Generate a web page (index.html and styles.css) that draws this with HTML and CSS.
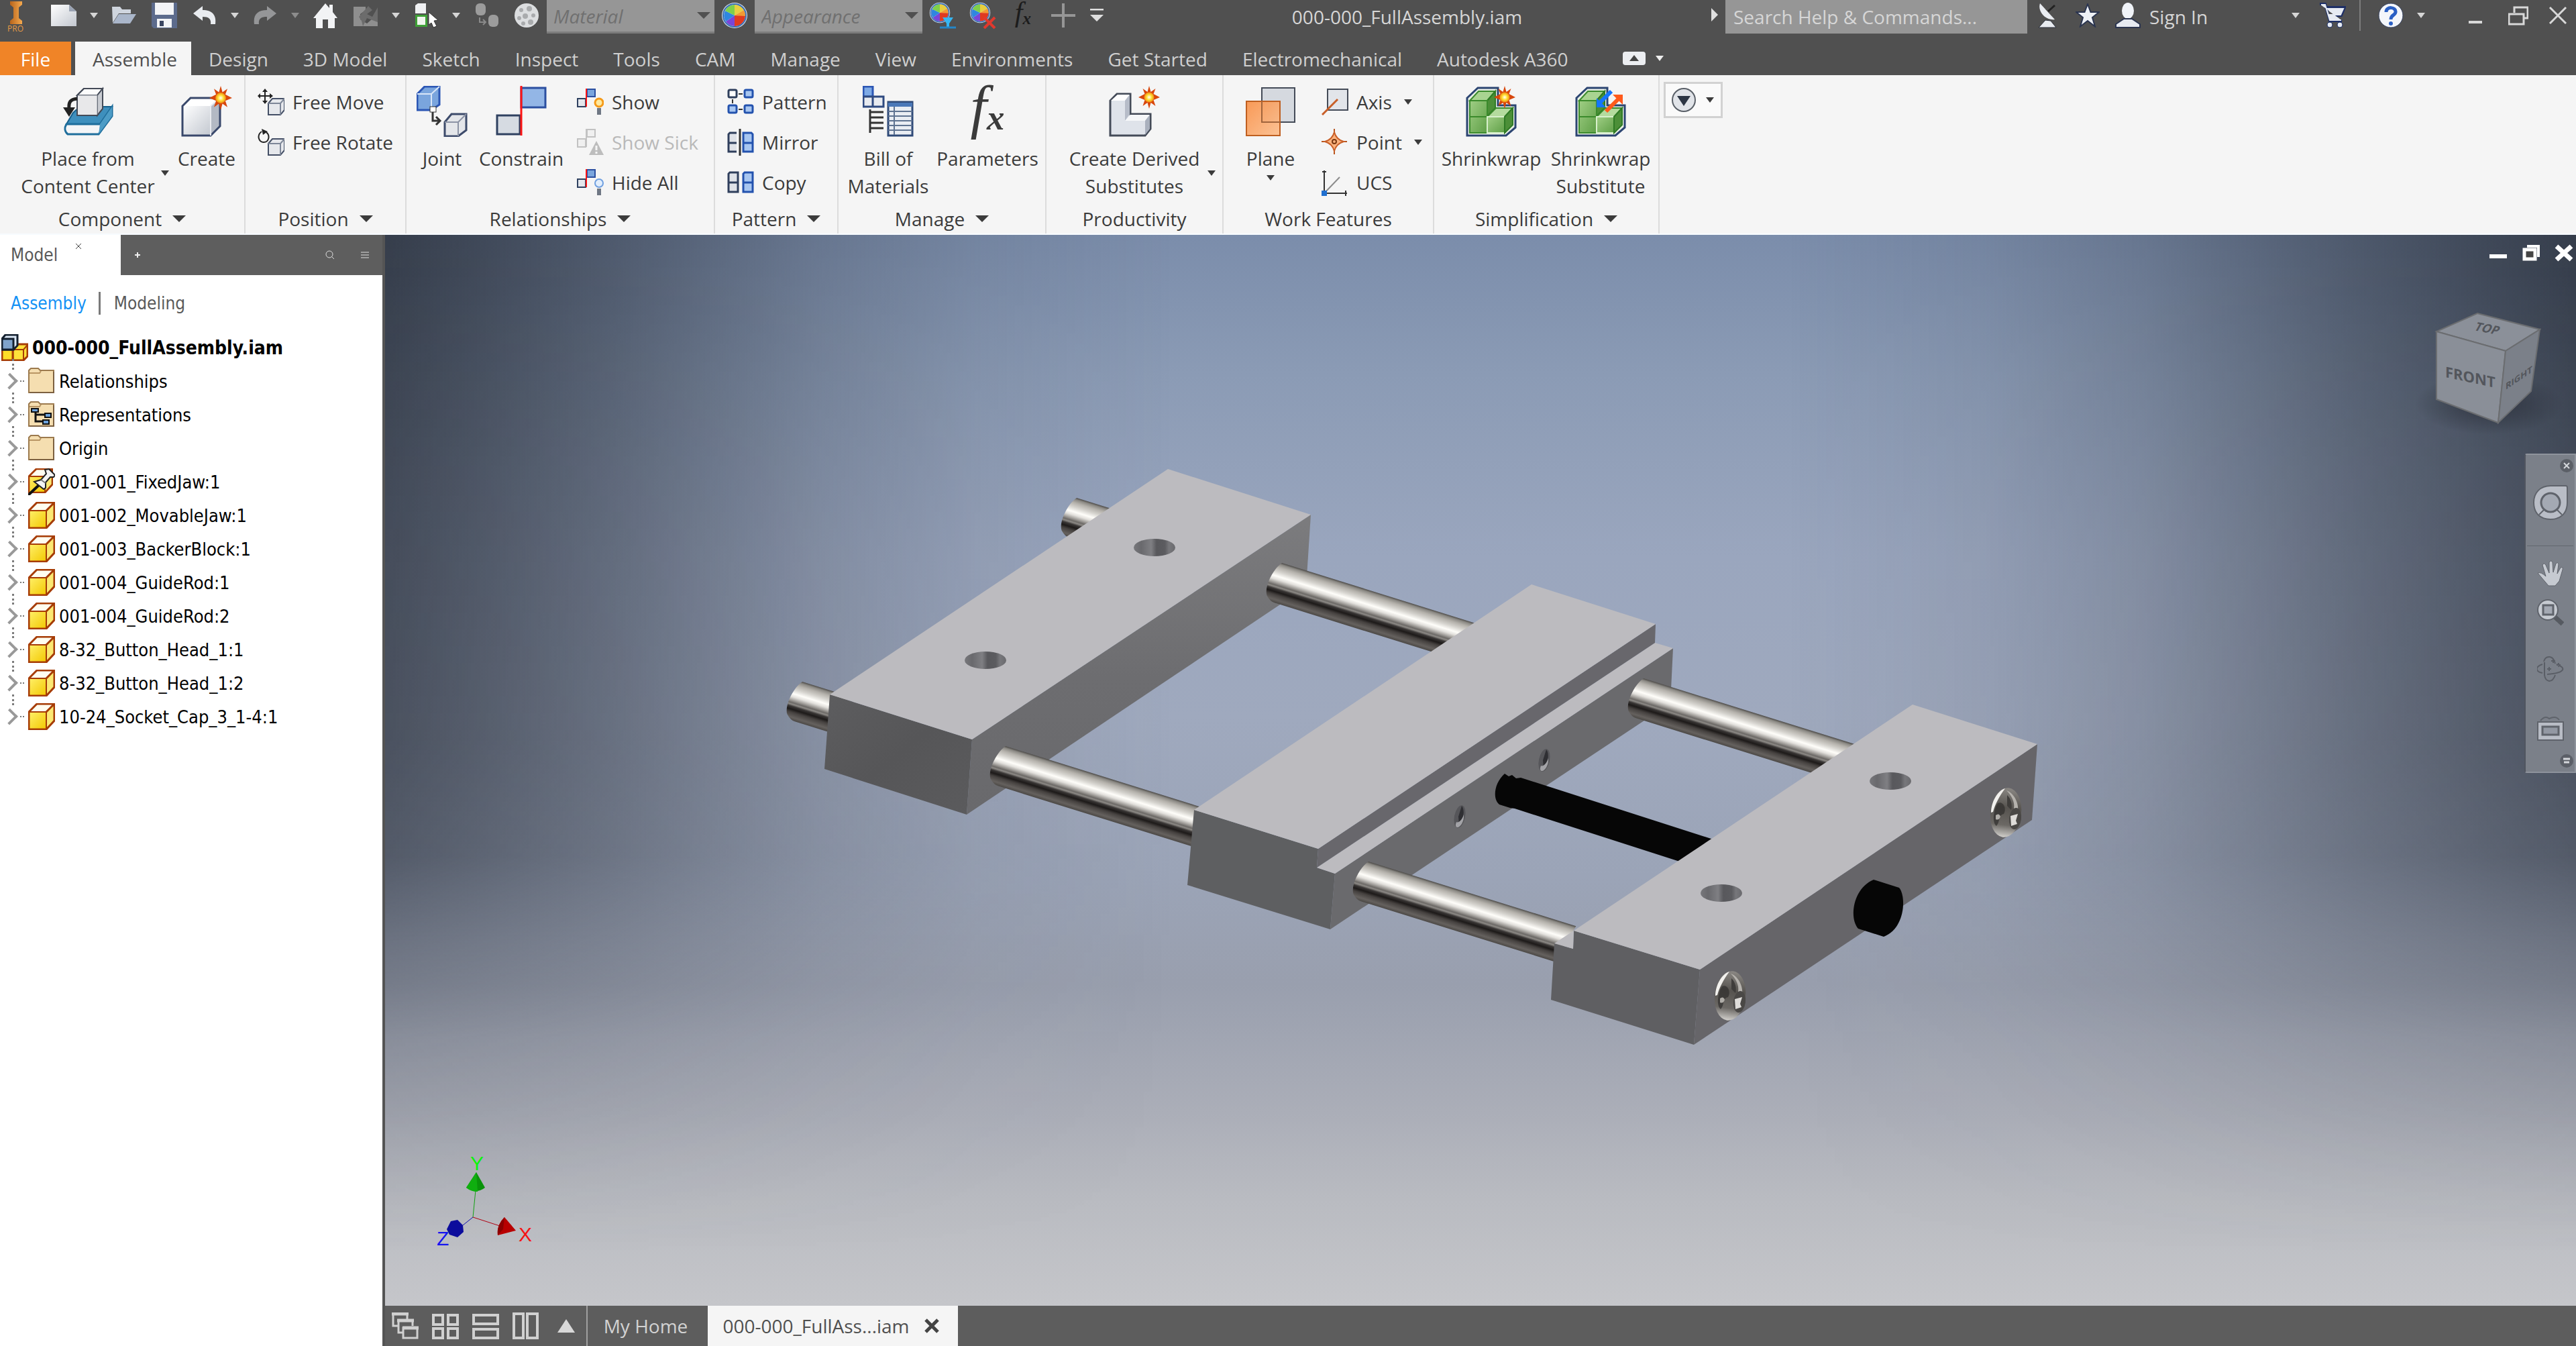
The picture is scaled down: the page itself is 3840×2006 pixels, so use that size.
FILE: index.html
```html
<!DOCTYPE html>
<html lang="en">
<head>
<meta charset="utf-8">
<title>000-000_FullAssembly.iam</title>
<link rel="stylesheet" href="styles.css">
</head>
<body>
<svg class="sprite" aria-hidden="true">
  <defs>
    <linearGradient id="g-white" x1="0" y1="0" x2="1" y2="1"><stop offset="0" stop-color="#ffffff"/><stop offset="1" stop-color="#c3c8d0"/></linearGradient>
    <linearGradient id="g-orange" x1="0" y1="0" x2="1" y2="1"><stop offset="0" stop-color="#f98f45"/><stop offset="1" stop-color="#fcbd8b"/></linearGradient>
    <linearGradient id="g-green" x1="0" y1="0" x2="1" y2="1"><stop offset="0" stop-color="#9fce84"/><stop offset="1" stop-color="#5f9f47"/></linearGradient>
    <linearGradient id="g-yellow" x1="0" y1="0" x2="1" y2="1"><stop offset="0" stop-color="#fff06a"/><stop offset="1" stop-color="#f2c800"/></linearGradient>
    <linearGradient id="g-ilogo" x1="0" y1="0" x2="1" y2="0"><stop offset="0" stop-color="#b8651c"/><stop offset="1" stop-color="#f5a94e"/></linearGradient>
    <radialGradient id="g-burst"><stop offset="0" stop-color="#ffffff"/><stop offset=".5" stop-color="#ffe23a"/><stop offset="1" stop-color="#f08a10"/></radialGradient>
  </defs>
  <symbol id="caret" viewBox="0 0 12 8"><path d="M0 0H12L6 8Z" fill="currentColor"/></symbol>
  <symbol id="caret-l" viewBox="0 0 20 10"><path d="M0 0H20L10 10Z" fill="currentColor"/></symbol>
  <symbol id="burst" viewBox="0 0 32 34"><path d="M16 0l2.500 9 7-5-3 8 9.500 5-9.500 4 3 9-7-5-2.500 9-2.500-9-7 5 3-9-9.500-4 9.500-5-3-8 7 5z" fill="#d8470c"/><circle cx="16" cy="17" r="7.500" fill="url(#g-burst)"/></symbol>

  <symbol id="logo" viewBox="0 0 18 34"><path d="M0 0H18V5L13 9V25L18 29V34H0V29L5 25V9L0 5Z" fill="url(#g-ilogo)"/></symbol>
  <symbol id="new" viewBox="0 0 40 34"><path d="M1 1H28L39 11V33H1Z" fill="url(#g-white)"/><path d="M28 1V11H39Z" fill="#9aa3b3"/></symbol>
  <symbol id="open" viewBox="0 0 40 34"><path d="M2 4H14L17 8H30V14H12L3 28Z" fill="#cfd5de"/><path d="M12 15H38L29 29H3Z" fill="#aab6ca"/></symbol>
  <symbol id="save" viewBox="0 0 40 40"><path d="M1 1H39V39H4L1 36Z" fill="#5c6b8c"/><path d="M6 1H34V19H6Z" fill="#f3f4f6"/><path d="M9 25H31V38H9Z" fill="#f3f4f6"/><path d="M13 28H19V36H13Z" fill="#3a4560"/></symbol>
  <symbol id="undo" viewBox="0 0 40 34"><path d="M3 14L17 3V9C31 9 38 16 36 30H29C30 22 26 19 17 19V25Z" fill="#e9ecf0"/></symbol>
  <symbol id="home" viewBox="0 0 40 40"><path d="M20 2L26 9V4H31V15L38 24H34V39H24V26H16V39H6V24H2Z" fill="#f2f3f5"/></symbol>
  <symbol id="update" viewBox="0 0 40 36"><path d="M2 5H20V10L12 16V24L22 30L38 16V34H2Z" fill="#8f8f8f"/><path d="M10 20L24 4L30 10L22 16L30 20L38 6V28L22 22L16 34L14 26Z" fill="#6c6c6c"/></symbol>
  <symbol id="asm" viewBox="0 0 40 38"><path d="M4 4L8 1H20V16H4Z" fill="#f0f1f3"/><path d="M4 18H22V36H4Z" fill="#3f9f37"/><path d="M7 21H19V33H7Z" fill="#f0f6ee"/><path d="M24 14L38 26L32 27L36 35L31 37L28 30L24 33Z" fill="#fff" stroke="#333" stroke-width="1"/></symbol>
  <symbol id="bodies" viewBox="0 0 40 38"><g fill="#9c9c9c"><rect x="4" y="1" width="15" height="18" rx="6"/><rect x="23" y="18" width="15" height="18" rx="6"/></g><path d="M10 22V29H18M15 25L19 29L15 33" stroke="#8a8a8a" stroke-width="2" fill="none"/></symbol>
  <symbol id="sphere" viewBox="0 0 40 40"><circle cx="20" cy="20" r="18" fill="#dcdee0"/><g fill="#a9abad"><circle cx="12" cy="12" r="3"/><circle cx="24" cy="10" r="4"/><circle cx="30" cy="20" r="3"/><circle cx="18" cy="21" r="4"/><circle cx="9" cy="24" r="3"/><circle cx="26" cy="30" r="4"/><circle cx="15" cy="32" r="3"/></g></symbol>
  <symbol id="wheel" viewBox="0 0 40 40"><circle cx="20" cy="20" r="19" fill="#dfe6ee"/><g stroke="none"><path d="M20 20V4A16 16 0 0 1 34 12Z" fill="#e8cf3f"/><path d="M20 20L34 12A16 16 0 0 1 36 22Z" fill="#f29a33"/><path d="M20 20L36 21A16 16 0 0 1 20 36Z" fill="#e03a20"/><path d="M20 20V36A16 16 0 0 1 7 29Z" fill="#7a45d8"/><path d="M20 20L7 29A16 16 0 0 1 6 13Z" fill="#2f86e0"/><path d="M20 20L6 13A16 16 0 0 1 20 4Z" fill="#7fd04a"/></g><circle cx="20" cy="20" r="17" fill="none" stroke="#3a6fb5" stroke-width="2"/></symbol>
  <symbol id="wheel-adjust" viewBox="0 0 40 40"><use href="#wheel" x="0" y="0" width="32" height="32"/><path d="M20 23H36L30 32V37H26V32Z" fill="#35b6f2"/><path d="M16 38H40" stroke="#2486c8" stroke-width="3"/></symbol>
  <symbol id="wheel-clear" viewBox="0 0 40 40"><use href="#wheel" x="0" y="0" width="32" height="32"/><path d="M22 23L38 39M38 23L22 39" stroke="#e0392e" stroke-width="4"/></symbol>
  <symbol id="plus" viewBox="0 0 40 40"><path d="M20 2V38M2 20H38" stroke="#969696" stroke-width="4"/></symbol>
  <symbol id="more" viewBox="0 0 20 20"><path d="M0 1H20" stroke="#e0e0e0" stroke-width="3"/><path d="M0 9H20L10 19Z" fill="#e0e0e0"/></symbol>
  <symbol id="dish" viewBox="0 0 34 40"><path d="M6 2C2 14 14 28 28 26Z" fill="#e9ecf1"/><path d="M18 14L28 5" stroke="#222" stroke-width="3"/><path d="M14 27L4 38H30L22 28Z" fill="#e9ecf1" stroke="#2b2f3a" stroke-width="1"/></symbol>
  <symbol id="star" viewBox="0 0 36 36"><path d="M18 1L22.500 13H35L25 21L29 34.500L18 26L7 34.500L11 21L1 13H13.500Z" fill="#eef1f6" stroke="#2b3550" stroke-width="2"/></symbol>
  <symbol id="person" viewBox="0 0 40 40"><ellipse cx="20" cy="13" rx="9" ry="12" fill="#f0f3f8"/><path d="M2 38V33L14 25H26L38 33V38Z" fill="#e6eaf1" stroke="#2b3550" stroke-width="2"/></symbol>
  <symbol id="cart" viewBox="0 0 40 40"><path d="M1 3H9L16 28H34M10 8H38L33 20H13" fill="#e6ebf2" stroke="#1d2f66" stroke-width="4"/><path d="M3 4H9L16 27H33M11 10H36L32 19H14Z" fill="#e6ebf2" stroke="#e6ebf2" stroke-width="2"/><circle cx="16" cy="34" r="4" fill="#e6ebf2" stroke="#1d2f66"/><circle cx="31" cy="34" r="4" fill="#e6ebf2" stroke="#1d2f66"/></symbol>
  <symbol id="help" viewBox="0 0 40 40"><circle cx="20" cy="20" r="18" fill="#f4f6fa" stroke="#33405f" stroke-width="1"/><path d="M13 15C13 6 28 7 27 15C26.500 20 20 19 20 26" fill="none" stroke="#2a5fc4" stroke-width="5"/><circle cx="20" cy="32" r="3" fill="#2a5fc4"/></symbol>

  <symbol id="place" viewBox="0 0 76 72"><path d="M16 38L26 29H74L56 55H6Z" fill="#3e8fbd" stroke="#16608c" stroke-width="2"/><path d="M6 55H56L74 29V43L54 70H8C3 66 3 60 6 55Z" fill="#f4f5f7" stroke="#1f6e9c" stroke-width="3"/><path d="M56 55L74 29V43L54 70Z" fill="#4d9cc6"/><path d="M22 12L32 2H60L52 12Z" fill="#fcfcfc" stroke="#444b58" stroke-width="2"/><path d="M52 12L60 2V32L52 42Z" fill="#c9ccd2" stroke="#444b58" stroke-width="2"/><path d="M22 12H52V42H22Z" fill="#e8e8ea" stroke="#8d929c" stroke-width="1"/><path d="M22 42V12L32 2H60V32L52 42Z" fill="none" stroke="#444b58" stroke-width="2"/><path d="M22 17C12 18 9 22 10 32" fill="none" stroke="#222" stroke-width="5"/><path d="M1 30H19L10 44Z" fill="#222"/></symbol>
  <symbol id="cube72" viewBox="0 0 72 76"><path d="M2 30L14 18H58L44 30Z" fill="#fff"/><path d="M44 30L58 18V60L44 74Z" fill="#b3b9c4"/><path d="M2 30H44V74H2Z" fill="url(#g-white)"/><path d="M2 30L14 18H58V60L44 74H2Z" fill="none" stroke="#39486b" stroke-width="3"/><path d="M44 30V74M44 30L58 18" stroke="#e8eaef" stroke-width="2"/></symbol>
  <symbol id="create" viewBox="0 0 76 76"><use href="#cube72" width="72" height="76"/><use href="#burst" x="42" y="0" width="34" height="36"/></symbol>
  <symbol id="joint" viewBox="0 0 76 76"><path d="M1 12L12 1H34V28L22 36H1Z" fill="#7aa5dd" stroke="#2b56b4" stroke-width="3"/><path d="M1 12H22V36M22 12L34 1" fill="none" stroke="#d9e6f8" stroke-width="2"/><path d="M24 36V52H34M29 46L35 52L29 58" fill="none" stroke="#333" stroke-width="3"/><rect x="20" y="31" width="9" height="8" fill="#fff" stroke="#333"/><path d="M42 54L52 42H74V66L62 75H42Z" fill="#e4e6ea" stroke="#3d4b6b" stroke-width="3"/><path d="M42 54H62V75M62 54L74 42" fill="none" stroke="#8c93a5" stroke-width="2"/></symbol>
  <symbol id="constrain" viewBox="0 0 76 76"><path d="M2 44H36V72H2Z" fill="#d6dbe2" stroke="#2f4160" stroke-width="3"/><path d="M38 3H74V32H38Z" fill="#93b6e6" stroke="#2b4fa0" stroke-width="3"/><path d="M38 0V74" stroke="#ff1414" stroke-width="3"/></symbol>
  <symbol id="bom" viewBox="0 0 76 76"><path d="M1 1H15V16H1Z" fill="#7eaae6" stroke="#2b56b4" stroke-width="3"/><path d="M1 16H15V31H1ZM15 16H31V31H15Z" fill="#e8ebf0" stroke="#2f4a80" stroke-width="3"/><path d="M11 35V70M11 39H31M11 47H31M11 55H31M11 63H31" stroke="#333" stroke-width="3"/><path d="M38 24H74V74H38Z" fill="#e9edf3" stroke="#2f4a78" stroke-width="3"/><path d="M38 25H74V31H38Z" fill="#4a78b8"/><path d="M38 38H74M38 45H74M38 52H74M38 59H74M38 66H74M47 31V73" stroke="#5f7391" stroke-width="2"/></symbol>
  <symbol id="derived" viewBox="0 0 76 76"><path d="M2 22L12 12H32V42H62V64L54 74H2Z" fill="#dfe3ea" stroke="#444b58" stroke-width="3"/><path d="M3 22L13 13H31L24 22Z" fill="#fff"/><path d="M24 22L31 13V42L24 52Z" fill="#b6bcc8"/><path d="M24 52L32 43H61L54 52Z" fill="#f6f7f9"/><path d="M54 52L61 43V64L54 73Z" fill="#a9b0bd"/><use href="#burst" x="44" y="0" width="32" height="34"/></symbol>
  <symbol id="plane" viewBox="0 0 76 76"><path d="M25 3H74V54H25Z" fill="#d5d9df" stroke="#444b58" stroke-width="2"/><path d="M2 23H52V74H2Z" fill="url(#g-orange)" fill-opacity=".9" stroke="#bf5f20" stroke-width="2"/><path d="M25 23V54H52" fill="none" stroke="#a0643c" stroke-width="2"/></symbol>
  <symbol id="shrink" viewBox="0 0 76 76"><path d="M2 18L18 3H48V29H74V62L60 74H2Z" fill="#e7efe4" stroke="#2c4572" stroke-width="3"/><path d="M6 22L19 8H44L32 22Z" fill="#a9d491" stroke="#3b8a2c" stroke-width="2"/><path d="M32 22L44 8V33L32 45Z" fill="#4c8f38" stroke="#2f7a25" stroke-width="2"/><path d="M6 22H32V46H6ZM6 46H32V70H6Z" fill="url(#g-green)" stroke="#3b8a2c" stroke-width="2"/><path d="M32 46L45 33H70L58 46Z" fill="#b4db9e" stroke="#3b8a2c" stroke-width="2"/><path d="M32 46H58V70H32Z" fill="url(#g-green)" stroke="#d8f0cc" stroke-width="2"/><path d="M58 46L70 33V58L58 70Z" fill="#4c8f38" stroke="#2f7a25" stroke-width="2"/></symbol>
  <symbol id="shrink-new" viewBox="0 0 76 76"><use href="#shrink" width="76" height="76"/><use href="#burst" x="42" y="0" width="32" height="34"/></symbol>
  <symbol id="shrink-sub" viewBox="0 0 76 76"><use href="#shrink" width="76" height="76"/><path d="M54 8L36 26" stroke="#1475ff" stroke-width="6"/><path d="M32 32V18L46 32Z" fill="#1475ff"/><path d="M46 38L64 20" stroke="#ff5a1c" stroke-width="6"/><path d="M56 13H71V28Z" fill="#ff5a1c"/></symbol>

  <symbol id="cube-s" viewBox="0 0 40 40"><path d="M16 22L22 15H40V32L34 39H16Z" fill="#e6e8ec" stroke="#444f66" stroke-width="2"/><path d="M16 22H34V39M34 22L40 15" fill="none" stroke="#7e8798" stroke-width="2"/></symbol>
  <symbol id="move" viewBox="0 0 40 40"><use href="#cube-s" width="40" height="40"/><path d="M11 0L15 5H12V10H18V7L23 11L18 15V12H12V18H15L11 23L7 18H10V12H4V15L0 11L4 7V10H10V5H7Z" fill="#222"/></symbol>
  <symbol id="rotate" viewBox="0 0 40 40"><use href="#cube-s" width="40" height="40"/><path d="M6 4C-2 10 2 20 9 20C17 20 19 10 13 5" fill="none" stroke="#222" stroke-width="2"/><path d="M6 0L15 4L8 9Z" fill="#222"/></symbol>
  <symbol id="rel" viewBox="0 0 40 40"><path d="M1 15H13V27H1Z" fill="#e4e7ec" stroke="#2f4160" stroke-width="2"/><path d="M15 1H27V12H15Z" fill="#7aa5dd" stroke="#2b4fa0" stroke-width="2"/><path d="M14 0V27" stroke="#ff1414" stroke-width="2"/></symbol>
  <symbol id="show" viewBox="0 0 40 40"><use href="#rel" width="40" height="40"/><circle cx="33" cy="21" r="6" fill="#ffe9a0" stroke="#f59a18" stroke-width="3"/><path d="M30 29H36V39H30Z" fill="#6f7784"/></symbol>
  <symbol id="hide" viewBox="0 0 40 40"><use href="#rel" width="40" height="40"/><circle cx="33" cy="21" r="6" fill="#e2eefc" stroke="#6f9fe0" stroke-width="2"/><path d="M30 29H36V39H30Z" fill="#6f7784"/></symbol>
  <symbol id="sick" viewBox="0 0 40 40"><g fill="#f0f0f0" stroke="#c2c2c2" stroke-width="2"><path d="M1 15H13V27H1ZM15 1H27V12H15Z"/></g><path d="M14 0V27" stroke="#c2c2c2" stroke-width="2"/><path d="M29 18L40 39H18Z" fill="#bdbdbd"/><path d="M29 25V32M29 34V37" stroke="#f5f5f5" stroke-width="3"/></symbol>
  <symbol id="pattern" viewBox="0 0 40 40"><rect x="2" y="2" width="12" height="11" rx="2" fill="#fff" stroke="#2f3f5c" stroke-width="3"/><g fill="#a8c6f0" stroke="#2352ae" stroke-width="3"><rect x="26" y="2" width="12" height="11" rx="2"/><rect x="2" y="25" width="12" height="11" rx="2"/><rect x="26" y="25" width="12" height="11" rx="2"/></g><path d="M17 8H23M17 31H23M8 16V22" stroke="#333" stroke-width="2"/></symbol>
  <symbol id="mirror" viewBox="0 0 40 40"><path d="M14 6H4L2 8V34H14M2 21H14" fill="#dfe2e8" stroke="#2f3f5c" stroke-width="3"/><path d="M24 6H36L38 8V34H24ZM24 21H38" fill="#a8c6f0" stroke="#2352ae" stroke-width="3"/><path d="M19 0V40" stroke="#333" stroke-width="3"/></symbol>
  <symbol id="copy" viewBox="0 0 40 40"><path d="M2 7L4 5H16V34H2ZM2 20H16" fill="#dfe2e8" stroke="#2f3f5c" stroke-width="3"/><path d="M24 7L26 5H38V34H24ZM24 20H38" fill="#a8c6f0" stroke="#2352ae" stroke-width="3"/></symbol>
  <symbol id="axis" viewBox="0 0 40 40"><path d="M9 1H39V32H9Z" fill="#e2e5ea" stroke="#444b58" stroke-width="2"/><path d="M1 39L24 16" stroke="#c85f28" stroke-width="3"/></symbol>
  <symbol id="point" viewBox="0 0 40 40"><path d="M19 0V38M0 19H38" stroke="#b5541e" stroke-width="2"/><path d="M19 5Q22 16 33 19Q22 22 19 33Q16 22 5 19Q16 16 19 5Z" fill="#fbb27e" stroke="#c85f28" stroke-width="2"/><circle cx="19" cy="19" r="3" fill="#fbb27e" stroke="#7a3812" stroke-width="2"/></symbol>
  <symbol id="ucs" viewBox="0 0 40 40"><path d="M4 36V2M4 36H38M1 4H7M36 32V40" stroke="#333" stroke-width="2"/><path d="M4 36L27 12" stroke="#8c8c8c" stroke-width="2"/><rect x="0" y="32" width="8" height="8" fill="#1f6fd0"/></symbol>

  <symbol id="t-part" viewBox="0 0 40 40"><path d="M1 13L13 1H39L27 13Z" fill="#fffdf0"/><path d="M27 13L39 1V26L27 39Z" fill="#fbe873"/><path d="M1 13H27V39H1Z" fill="url(#g-yellow)"/><path d="M1 13H27V39" fill="none" stroke="#a63c06" stroke-width="2"/><path d="M1 13L13 1H39V26L27 39H1ZM27 13L39 1" fill="none" stroke="#a63c06" stroke-width="3"/></symbol>
  <symbol id="t-pinned" viewBox="0 0 40 40"><use href="#t-part" width="37" height="37"/><path d="M0 40L16 25" stroke="#111" stroke-width="4"/><path d="M9 20L19 17L27 8L25 2L31 1L40 10L38 13L33 13L26 21V29L23 31Z" fill="#f4f4f4" stroke="#222" stroke-width="2"/><path d="M19 17L26 22" stroke="#777" stroke-width="2"/></symbol>
  <symbol id="t-folder" viewBox="0 0 40 40"><path d="M1 4L4 1H15L18 4H38V37H1Z" fill="#f5deb0" stroke="#9c7a4e" stroke-width="2"/><path d="M2 8H17L19 5" fill="none" stroke="#b99664" stroke-width="2"/><path d="M2 37H38V6" fill="none" stroke="#7c6040" stroke-width="2"/></symbol>
  <symbol id="t-rep" viewBox="0 0 40 40"><use href="#t-folder" width="40" height="40"/><path d="M11 14V30H22M11 20H24" fill="none" stroke="#111" stroke-width="3"/><g fill="#6ca2dc" stroke="#111" stroke-width="2"><path d="M5 11H15V16H5ZM25 18H34V24H25ZM22 28H31V34H22Z"/></g></symbol>
  <symbol id="t-asm" viewBox="0 0 40 40"><path d="M17 21L24 15H39V33L33 39H17Z" fill="#ffe23a" stroke="#a63c06" stroke-width="3"/><path d="M1 23H17V39H1Z" fill="#ffdf28" stroke="#a63c06" stroke-width="3"/><path d="M17 23H33V39M33 23L39 16" fill="none" stroke="#a63c06" stroke-width="2"/><path d="M1 7L6 1H24V17L18 23H1Z" fill="#dbe7f5" stroke="#14202f" stroke-width="3"/><path d="M1 7H18V23H1Z" fill="#7fa3cc" stroke="#14202f" stroke-width="3"/></symbol>
</svg>

<div class="app">
  <header class="titlebar">
    <div class="brand"><svg class="brand-i"><use href="#logo"/></svg><span>PRO</span></div>
    <button class="tool" aria-label="New"><svg class="i40"><use href="#new"/></svg></button>
    <button class="drop" aria-label="New options"><svg><use href="#caret"/></svg></button>
    <button class="tool" aria-label="Open"><svg class="i40"><use href="#open"/></svg></button>
    <button class="tool" aria-label="Save"><svg class="i40"><use href="#save"/></svg></button>
    <button class="tool" aria-label="Undo"><svg class="i40"><use href="#undo"/></svg></button>
    <button class="drop" aria-label="Undo list"><svg><use href="#caret"/></svg></button>
    <button class="tool faded flip" aria-label="Redo"><svg class="i40"><use href="#undo"/></svg></button>
    <button class="drop faded" aria-label="Redo list"><svg><use href="#caret"/></svg></button>
    <button class="tool" aria-label="Home"><svg class="i40"><use href="#home"/></svg></button>
    <button class="tool" aria-label="Update"><svg class="i40"><use href="#update"/></svg></button>
    <button class="drop" aria-label="Update options"><svg><use href="#caret"/></svg></button>
    <button class="tool" aria-label="Select"><svg class="i40"><use href="#asm"/></svg></button>
    <button class="drop" aria-label="Select options"><svg><use href="#caret"/></svg></button>
    <button class="tool" aria-label="Bodies"><svg class="i40"><use href="#bodies"/></svg></button>
    <button class="tool" aria-label="Material browser"><svg class="i40"><use href="#sphere"/></svg></button>
    <div class="combo"><select aria-label="Material"><option>Material</option></select><svg><use href="#caret-l"/></svg></div>
    <button class="tool" aria-label="Appearance browser"><svg class="i40"><use href="#wheel"/></svg></button>
    <div class="combo"><select aria-label="Appearance"><option>Appearance</option></select><svg><use href="#caret-l"/></svg></div>
    <button class="tool" aria-label="Adjust"><svg class="i40"><use href="#wheel-adjust"/></svg></button>
    <button class="tool" aria-label="Clear"><svg class="i40"><use href="#wheel-clear"/></svg></button>
    <button class="tool fx" aria-label="Parameters"><i>f<sub>x</sub></i></button>
    <button class="tool" aria-label="Add"><svg class="i40"><use href="#plus"/></svg></button>
    <button class="drop wide" aria-label="Customize"><svg class="i20"><use href="#more"/></svg></button>
    <h1>000-000_FullAssembly.iam</h1>
    <button class="expand" aria-label="Collapse search"><svg viewBox="0 0 10 20"><path d="M0 0L10 10L0 20Z" fill="#e0e0e0"/></svg></button>
    <input class="search" type="text" aria-label="Search" placeholder="Search Help &amp; Commands...">
    <button class="tool" aria-label="Communication center"><svg class="i40"><use href="#dish"/></svg></button>
    <button class="tool" aria-label="Favorites"><svg class="i36"><use href="#star"/></svg></button>
    <button class="tool" aria-label="Account"><svg class="i40"><use href="#person"/></svg></button>
    <button class="signin">Sign In</button>
    <button class="drop" aria-label="Account options"><svg><use href="#caret"/></svg></button>
    <button class="tool cart" aria-label="Store"><svg class="i40"><use href="#cart"/></svg></button>
    <button class="tool help" aria-label="Help"><svg class="i40"><use href="#help"/></svg></button>
    <button class="drop" aria-label="Help options"><svg><use href="#caret"/></svg></button>
    <div class="winctl">
      <button aria-label="Minimize"><svg class="i30" viewBox="0 0 30 30"><path d="M5 25H25" stroke="#d8d8d8" stroke-width="4"/></svg></button>
      <button aria-label="Restore"><svg class="i30" viewBox="0 0 30 30"><path d="M9 11V3H29V19H24" fill="none" stroke="#d8d8d8" stroke-width="3"/><path d="M1 13H23V28H1Z" fill="none" stroke="#d8d8d8" stroke-width="3"/></svg></button>
      <button aria-label="Close"><svg class="i30" viewBox="0 0 30 30"><path d="M3 3L27 27M27 3L3 27" stroke="#d8d8d8" stroke-width="3"/></svg></button>
    </div>
  </header>

  <nav class="tabs">
    <button class="file">File</button>
    <button class="current">Assemble</button>
    <button>Design</button>
    <button>3D Model</button>
    <button>Sketch</button>
    <button>Inspect</button>
    <button>Tools</button>
    <button>CAM</button>
    <button>Manage</button>
    <button>View</button>
    <button>Environments</button>
    <button>Get Started</button>
    <button>Electromechanical</button>
    <button>Autodesk A360</button>
    <button class="min" aria-label="Minimize ribbon"><svg class="min-icon" viewBox="0 0 36 22"><rect x="1" y="1" width="34" height="20" rx="4" fill="#eceef1"/><path d="M11 15L18 6L25 15Z" fill="#444"/></svg><svg class="caret"><use href="#caret"/></svg></button>
  </nav>

  <div class="ribbon">
    <section class="panel component">
      <div class="body">
        <button class="big"><svg><use href="#place"/></svg><span>Place from<br>Content Center</span><svg class="caret side"><use href="#caret"/></svg></button>
        <button class="big"><svg><use href="#create"/></svg><span>Create</span></button>
      </div>
      <h2>Component<svg><use href="#caret-l"/></svg></h2>
    </section>
    <section class="panel position">
      <div class="body">
        <div class="rows">
          <button><svg><use href="#move"/></svg>Free Move</button>
          <button><svg><use href="#rotate"/></svg>Free Rotate</button>
        </div>
      </div>
      <h2>Position<svg><use href="#caret-l"/></svg></h2>
    </section>
    <section class="panel relationships">
      <div class="body">
        <button class="big"><svg><use href="#joint"/></svg><span>Joint</span></button>
        <button class="big"><svg><use href="#constrain"/></svg><span>Constrain</span></button>
        <div class="rows">
          <button><svg><use href="#show"/></svg>Show</button>
          <button disabled><svg><use href="#sick"/></svg>Show Sick</button>
          <button><svg><use href="#hide"/></svg>Hide All</button>
        </div>
      </div>
      <h2>Relationships<svg><use href="#caret-l"/></svg></h2>
    </section>
    <section class="panel pattern">
      <div class="body">
        <div class="rows">
          <button><svg><use href="#pattern"/></svg>Pattern</button>
          <button><svg><use href="#mirror"/></svg>Mirror</button>
          <button><svg><use href="#copy"/></svg>Copy</button>
        </div>
      </div>
      <h2>Pattern<svg><use href="#caret-l"/></svg></h2>
    </section>
    <section class="panel manage">
      <div class="body">
        <button class="big"><svg><use href="#bom"/></svg><span>Bill of<br>Materials</span></button>
        <button class="big"><i class="fx-big">f<sub>x</sub></i><span>Parameters</span></button>
      </div>
      <h2>Manage<svg><use href="#caret-l"/></svg></h2>
    </section>
    <section class="panel productivity">
      <div class="body">
        <button class="big"><svg><use href="#derived"/></svg><span>Create Derived<br>Substitutes</span><svg class="caret side"><use href="#caret"/></svg></button>
      </div>
      <h2>Productivity</h2>
    </section>
    <section class="panel work">
      <div class="body">
        <button class="big"><svg><use href="#plane"/></svg><span>Plane</span><svg class="caret"><use href="#caret"/></svg></button>
        <div class="rows">
          <button><svg><use href="#axis"/></svg>Axis<svg class="caret"><use href="#caret"/></svg></button>
          <button><svg><use href="#point"/></svg>Point<svg class="caret"><use href="#caret"/></svg></button>
          <button><svg><use href="#ucs"/></svg>UCS</button>
        </div>
      </div>
      <h2>Work Features</h2>
    </section>
    <section class="panel simplification">
      <div class="body">
        <button class="big"><svg><use href="#shrink-new"/></svg><span>Shrinkwrap</span></button>
        <button class="big"><svg><use href="#shrink-sub"/></svg><span>Shrinkwrap<br>Substitute</span></button>
      </div>
      <h2>Simplification<svg><use href="#caret-l"/></svg></h2>
    </section>
    <button class="extra" aria-label="More panels"><svg viewBox="0 0 38 38"><circle cx="19" cy="19" r="17" fill="#e1e4e9" stroke="#5a6068" stroke-width="2"/><path d="M9 13H29L19 28Z" fill="#2c3544"/></svg><svg class="caret"><use href="#caret"/></svg></button>
  </div>

  <div class="workspace">
    <aside class="browser">
      <div class="browser-tabs">
        <button class="model-tab">Model<svg viewBox="0 0 10 10"><path d="M1 1L9 9M9 1L1 9" stroke="#444" stroke-width="1"/></svg></button>
        <button class="add" aria-label="Add tab"><svg viewBox="0 0 10 10"><path d="M5 1V9M1 5H9" stroke="#eee" stroke-width="2"/></svg></button>
        <button class="find" aria-label="Search tree"><svg viewBox="0 0 14 14"><circle cx="6" cy="6" r="5" fill="none" stroke="#ddd"/><path d="M9 9L13 13" stroke="#ddd"/></svg></button>
        <button class="find" aria-label="Menu"><svg viewBox="0 0 14 14"><path d="M1 3H13M1 7H13M1 11H13" stroke="#ddd"/></svg></button>
      </div>
      <div class="modes"><a href="#assembly" class="on">Assembly</a><a href="#modeling">Modeling</a></div>
      <ul class="tree">
        <li class="root"><svg><use href="#t-asm"/></svg>000-000_FullAssembly.iam</li>
        <li><button class="twist" aria-label="Expand"></button><svg><use href="#t-folder"/></svg>Relationships</li>
        <li><button class="twist" aria-label="Expand"></button><svg><use href="#t-rep"/></svg>Representations</li>
        <li><button class="twist" aria-label="Expand"></button><svg><use href="#t-folder"/></svg>Origin</li>
        <li><button class="twist" aria-label="Expand"></button><svg><use href="#t-pinned"/></svg>001-001_FixedJaw:1</li>
        <li><button class="twist" aria-label="Expand"></button><svg><use href="#t-part"/></svg>001-002_MovableJaw:1</li>
        <li><button class="twist" aria-label="Expand"></button><svg><use href="#t-part"/></svg>001-003_BackerBlock:1</li>
        <li><button class="twist" aria-label="Expand"></button><svg><use href="#t-part"/></svg>001-004_GuideRod:1</li>
        <li><button class="twist" aria-label="Expand"></button><svg><use href="#t-part"/></svg>001-004_GuideRod:2</li>
        <li><button class="twist" aria-label="Expand"></button><svg><use href="#t-part"/></svg>8-32_Button_Head_1:1</li>
        <li><button class="twist" aria-label="Expand"></button><svg><use href="#t-part"/></svg>8-32_Button_Head_1:2</li>
        <li><button class="twist" aria-label="Expand"></button><svg><use href="#t-part"/></svg>10-24_Socket_Cap_3_1-4:1</li>
      </ul>
    </aside>

    <main class="stage">
      <div class="viewport">
        <svg class="scene" viewBox="574 350 3266 1596" role="img" aria-label="Vise assembly">
          <defs>
            <linearGradient id="rod" x1="0" y1="0" x2="0" y2="1">
              <stop offset="0" stop-color="#4d4b48"/><stop offset=".05" stop-color="#8b8984"/><stop offset=".13" stop-color="#b4b1ab"/><stop offset=".24" stop-color="#d6d4cf"/><stop offset=".35" stop-color="#fffefa"/><stop offset=".43" stop-color="#e2e0dc"/><stop offset=".52" stop-color="#9a9793"/><stop offset=".57" stop-color="#6c6966"/><stop offset=".61" stop-color="#8d8a86"/><stop offset=".66" stop-color="#393635"/><stop offset=".73" stop-color="#1d1a19"/><stop offset=".8" stop-color="#45413f"/><stop offset=".92" stop-color="#65615e"/><stop offset="1" stop-color="#4b4845"/>
            </linearGradient>
            <linearGradient id="side" gradientUnits="userSpaceOnUse" x1="0" y1="700" x2="0" y2="1215"><stop offset="0" stop-color="#808082"/><stop offset=".6" stop-color="#6d6d70"/><stop offset="1" stop-color="#69696c"/></linearGradient>
            <linearGradient id="front" x1="0" y1="0" x2="1" y2="1"><stop offset="0" stop-color="#5d5d5f"/><stop offset=".5" stop-color="#565658"/><stop offset="1" stop-color="#5b5b5d"/></linearGradient>
            <linearGradient id="hole" x1="0" y1="0" x2="1" y2="0"><stop offset="0" stop-color="#77777b"/><stop offset=".18" stop-color="#69696d"/><stop offset=".42" stop-color="#7f7f83"/><stop offset=".55" stop-color="#58585c"/><stop offset=".75" stop-color="#5c5c60"/><stop offset=".85" stop-color="#77777b"/><stop offset="1" stop-color="#6a6a6e"/></linearGradient>
            <radialGradient id="shadow"><stop offset="0" stop-color="#20242c" stop-opacity=".6"/><stop offset="1" stop-color="#20242c" stop-opacity="0"/></radialGradient>
            <linearGradient id="head" x1="0" y1="0" x2="0" y2="1"><stop offset="0" stop-color="#8a8783"/><stop offset=".4" stop-color="#56534f"/><stop offset=".75" stop-color="#6b6864"/><stop offset="1" stop-color="#d2d0cc"/></linearGradient>
            <g id="bolt"><ellipse rx="23" ry="37" fill="url(#head)" transform="rotate(7)"/><path d="M-22 0C-22 -16 -12 -33 -1 -36C-10 -24 -16 -12 -19 -1Z" fill="#f2f1ee"/><path d="M1 -33C14 -28 20 -12 18 0L12 -6C14 -16 8 -26 1 -33Z" fill="#b5b2ad"/><path d="M2 -26C8 -20 10 -12 8 -4L2 -10Z" fill="#3f3d3b"/><path d="M-12 -14C-4 -18 2 -6 -3 2C-12 4 -8 14 -14 20C-21 14 -18 -4 -12 -14Z" fill="#2f2d2c" opacity=".7"/><path d="M-15 4Q-10 0 -8 6Q-10 12 -15 10Z" fill="#b0ada8"/><ellipse cx="14" cy="9" rx="9" ry="16" fill="#4a4846" transform="rotate(7 14 9)"/><path d="M7 5L18 2L15 12L17 17L8 20Z" fill="#dedcd9"/></g>
            <g id="tapped"><ellipse rx="8" ry="17" fill="#56565a" transform="rotate(12)"/><path d="M3 -16C8 -10 6 4 -1 12L-2 0Z" fill="#2f2f33"/><path d="M-5 8C-2 10 3 6 6 -3C7 8 0 17 -4 16C-7 15 -6 11 -5 8Z" fill="#a3a3a7"/></g>
          </defs>
          <g fill="url(#rod)">
            <path transform="translate(1605 742) rotate(17.3)" d="M0 0C-10 12 -15 42 -7 53Q0 60 7 60L120 60V0Z"/>
            <path transform="translate(1196 1016) rotate(17.3)" d="M0 0C-10 12 -15 42 -7 53Q0 60 7 60L70 60V0Z"/>
          </g>
          <g class="jaw-fixed">
            <path d="M1449 1102L1954 767L1947 875L1441 1214Z" fill="url(#side)"/>
            <path d="M1237 1035L1449 1102L1441 1214L1229 1146Z" fill="url(#front)"/>
            <path d="M1741 699L1954 767L1449 1102L1237 1035Z" fill="#bcbbbf"/>
            <ellipse cx="1721" cy="816" rx="31" ry="13" fill="url(#hole)"/><ellipse cx="1469" cy="984" rx="31" ry="13" fill="url(#hole)"/>
          </g>
          <g fill="url(#rod)">
            <path transform="translate(1911 839) rotate(17.3)" d="M0 0C-10 12 -15 42 -7 53Q0 60 7 60L310 60V0Z"/>
            <path transform="translate(1499 1112) rotate(17.3)" d="M0 0C-10 12 -15 42 -7 53Q0 60 7 60L310 60V0Z"/>
          </g>
          <g class="jaw-movable">
            <path d="M1990 1302L2494 966L2490 1048L1983 1385Z" fill="#6a6a6d"/>
            <path d="M1780 1207L1965 1265L1963 1293L1990 1302L1983 1385L1770 1319Z" fill="#5e5f61"/>
            <path d="M1963 1293L2467 958L2494 966L1990 1302Z" fill="#bcbbbf"/>
            <path d="M1965 1265L2468 930L2467 958L1963 1293Z" fill="#68676c"/>
            <path d="M2283 871L2468 930L1965 1265L1780 1207Z" fill="#bcbbbf"/>
            <use href="#tapped" x="2302" y="1133"/><use href="#tapped" x="2176" y="1217"/>
          </g>
          <path d="M2243 1153L2249 1157L2254 1155L2260 1160L2267 1159L2560 1253L2510 1286L2258 1205L2251 1204L2235 1199C2224 1190 2228 1166 2243 1153Z" fill="#060606"/>
          <g fill="url(#rod)">
            <path transform="translate(2450 1011) rotate(17.3)" d="M0 0C-10 12 -15 42 -7 53Q0 60 7 60L340 60V0Z"/>
            <path transform="translate(2040 1284) rotate(17.3)" d="M0 0C-10 12 -15 42 -7 53Q0 60 7 60L310 60L324 0Z"/>
          </g>
          <g class="backer">
            <path d="M2534 1445L3037 1109L3029 1222L2525 1557Z" fill="#666569"/>
            <path d="M2346 1387L2534 1445L2525 1557L2312 1490L2317 1406L2345 1414Z" fill="#5f5f62"/>
            <path d="M2317 1406L2346 1387L2345 1414Z" fill="#bcbbbf"/>
            <path d="M2851 1050L3037 1109L2534 1445L2346 1387Z" fill="#bcbbbf"/>
            <ellipse cx="2818" cy="1164" rx="31" ry="13" fill="url(#hole)"/><ellipse cx="2566" cy="1331" rx="31" ry="13" fill="url(#hole)"/>
            <use href="#bolt" x="2990" y="1211"/><use href="#bolt" x="2579" y="1484"/>
            <path d="M2793 1311L2831 1323C2842 1336 2840 1384 2808 1396L2770 1384C2756 1368 2762 1324 2793 1311Z" fill="#060606"/>
          </g>
          <g class="cube">
            <ellipse cx="3710" cy="602" rx="110" ry="46" fill="url(#shadow)"/>
            <g stroke="#6b6d70" stroke-width="2">
              <path d="M3693 467L3786 491L3735 523L3632 494Z" fill="#8b9099"/>
              <path d="M3632 494L3735 523L3724 630L3632 595Z" fill="#8a8f98"/>
              <path d="M3735 523L3786 491L3773 583L3724 630Z" fill="#7b8089"/>
            </g>
            <text class="cube-text" font-size="22" transform="translate(3645 562) skewY(12)">FRONT</text>
            <text class="cube-text" font-size="18" transform="translate(3687 492) rotate(11) skewX(-18)">TOP</text>
            <text class="cube-text" font-size="13" transform="translate(3735 581) skewY(-34)">RIGHT</text>
          </g>
          <g class="triad">
            <path d="M705 1814L709 1774" stroke="#12a012" stroke-width="1"/><path d="M705 1814L745 1827" stroke="#b00010" stroke-width="1"/><path d="M705 1814L690 1826" stroke="#1010b0" stroke-width="1"/>
            <path d="M710 1747L723 1770Q710 1780 695 1770Z" fill="#0a930a"/><path d="M710 1747L712 1776Q702 1776 695 1770Z" fill="#0fae0f"/>
            <path d="M752 1814Q740 1826 742 1841L769 1834Z" fill="#b80000"/><path d="M752 1814Q740 1826 742 1841L750 1832Z" fill="#8c0000"/>
            <path d="M672 1820L682 1818L690 1826L691 1836L682 1844L670 1840L666 1832Z" fill="#0c0c9c"/>
            <text x="701" y="1744" font-size="30" fill="#0cf50c">Y</text><text x="773" y="1850" font-size="30" fill="#f51414">X</text><text x="651" y="1856" font-size="30" fill="#1414f0">Z</text>
          </g>
        </svg>
        <div class="docctl">
          <button aria-label="Minimize document"><svg viewBox="0 0 32 28"><path d="M3 19H29" stroke="#fff" stroke-width="6"/></svg></button>
          <button aria-label="Restore document"><svg viewBox="0 0 32 28"><path d="M10 4H27V20" fill="none" stroke="#fff" stroke-width="4"/><path d="M6 9H22V23H6Z" fill="#444" stroke="#fff" stroke-width="5"/></svg></button>
          <button aria-label="Close document"><svg viewBox="0 0 32 28"><path d="M5 4L27 24M27 4L5 24" stroke="#fff" stroke-width="7"/></svg></button>
        </div>
        <div class="navbar">
          <button class="pin" aria-label="Close navigation bar"><svg viewBox="0 0 20 20"><circle cx="10" cy="10" r="10" fill="#5b5f67"/><path d="M6 6L14 14M14 6L6 14" stroke="#d5d8dc" stroke-width="2"/></svg></button>
          <button class="steer" aria-label="Steering wheel"><svg viewBox="0 0 54 54"><path d="M27 2H50Q52 2 52 5V27C52 43 42 52 27 52C12 52 2 43 2 27C2 12 12 2 27 2Z" fill="#b9bdc6" stroke="#5f636b" stroke-width="2"/><circle cx="27" cy="27" r="14" fill="#a4a9b3" stroke="#5f636b" stroke-width="3"/><path d="M17 38L10 45M37 38L44 45" stroke="#5f636b" stroke-width="2"/></svg></button>
          <button class="nav" aria-label="Pan"><svg viewBox="0 0 40 40"><path d="M1 20Q6 18 13 25L8 8Q10 4 13 8L18 20V4Q21 0 23 4L24 19L28 6Q31 3 32 7L30 21L35 12Q39 10 38 15L33 32L27 39H17Z" fill="#c6cad1" stroke="#5f636b" stroke-width="1"/></svg></button>
          <button class="nav" aria-label="Zoom"><svg viewBox="0 0 40 40"><path d="M26 26L38 37" stroke="#565a61" stroke-width="7"/><circle cx="16" cy="16" r="15" fill="#c6cad1" stroke="#5f636b" stroke-width="2"/><rect x="9" y="9" width="15" height="14" fill="#a4a9b3" stroke="#5f636b" stroke-width="3"/></svg></button>
          <button class="nav orbit" aria-label="Orbit"><svg viewBox="0 0 40 40"><g fill="none" stroke="#5a5e66" stroke-width="2"><path d="M10 9Q12 1 19 2Q25 3 27 12M27 29Q24 38 18 38Q12 37 11 29M11 10V30"/><path d="M8 13C-4 17 -2 24 8 26M29 13C44 18 42 26 15 28M21 8H27M24 5V11M15 20H21M18 17V23M29 14H35M32 11V17"/></g></svg></button>
          <button class="nav" aria-label="Look at"><svg viewBox="0 0 40 40"><path d="M5 10Q12 2 18 7Q28 2 33 9" fill="none" stroke="#5f636b" stroke-width="2"/><rect x="1" y="12" width="38" height="27" fill="#b9bdc6" stroke="#5f636b" stroke-width="2"/><rect x="8" y="19" width="24" height="12" fill="#9398a3" stroke="#5f636b" stroke-width="3"/></svg></button>
          <button class="pin" aria-label="Customize navigation bar"><svg viewBox="0 0 20 20"><circle cx="10" cy="10" r="10" fill="#5b5f67"/><path d="M5 7H15M6 12H14" stroke="#d5d8dc" stroke-width="3"/></svg></button>
        </div>
      </div>
      <div class="docbar">
        <div class="arrange">
          <button aria-label="Cascade"><svg viewBox="0 0 40 40"><g fill="none" stroke="#d0d0d0" stroke-width="3"><path d="M9 20H2V2H23V10"/><path d="M17 30H10V12H31V20"/><path d="M17 23H38V38H17Z"/></g><path d="M0 2H25M8 12H33M16 23H40" stroke="#d0d0d0" stroke-width="5"/></svg></button>
          <button aria-label="Tile"><svg viewBox="0 0 40 40"><path d="M2 4H16V18H2ZM24 4H38V18H24ZM2 24H16V38H2ZM24 24H38V38H24Z" fill="none" stroke="#d0d0d0" stroke-width="4"/></svg></button>
          <button aria-label="Tile horizontally"><svg viewBox="0 0 40 40"><path d="M2 4H38V17H2ZM2 25H38V38H2Z" fill="none" stroke="#d0d0d0" stroke-width="4"/></svg></button>
          <button aria-label="Tile vertically"><svg viewBox="0 0 40 40"><path d="M2 2H16V38H2ZM22 2H37V38H22Z" fill="none" stroke="#d0d0d0" stroke-width="4"/></svg></button>
          <button aria-label="Show list"><svg viewBox="0 0 40 40"><path d="M20 10L33 30H7Z" fill="#d8d8d8"/></svg></button>
        </div>
        <button class="doc">My Home</button>
        <button class="doc open">000-000_FullAss...iam<svg viewBox="0 0 22 22"><path d="M2 2L20 20M20 2L2 20" stroke="#444" stroke-width="5"/></svg></button>
      </div>
    </main>
  </div>
</div>
</body>
</html>
```
FILE: styles.css
```css
* { box-sizing: border-box; }
body { margin: 0; font-family: "Open Sans", "Noto Sans", sans-serif; font-size: 28px; color: #3b3b3b; background: #505050; }
button { font: inherit; color: inherit; background: none; border: 0; padding: 0; margin: 0; }
svg { display: block; flex: none; }
.sprite { position: absolute; width: 0; height: 0; }
.app { display: flex; flex-direction: column; min-height: 100vh; }

/* title bar */
.titlebar { display: flex; height: 62px; padding-bottom: 12px; background: #505050; color: #d6d6d6; align-items: stretch; }
.brand { width: 65px; padding: 2px 0 0 11px; display: flex; flex-direction: column; align-items: flex-start; font-size: 12px; line-height: 14px; color: #e59a45; }
.brand-i { width: 18px; height: 34px; margin-left: 4px; }
.tool { width: 60px; height: 46px; display: flex; align-items: center; justify-content: center; flex: none; }
.drop { width: 30px; height: 46px; display: flex; align-items: center; justify-content: center; flex: none; }
.drop.wide { width: 40px; }
.drop svg { width: 12px; height: 8px; }
.faded { opacity: .45; }
.flip svg { transform: scaleX(-1); }
.i40 { width: 40px; height: 40px; }
.i36 { width: 36px; height: 36px; }
.drop .i20 { width: 20px; height: 20px; }
.i30 { width: 30px; height: 30px; }
.fx { font-family: "Liberation Serif", serif; font-size: 42px; line-height: 40px; color: #1c1c1c; }
.fx sub, .fx-big sub { font-size: 60%; font-weight: 700; vertical-align: -4px; }
.combo { position: relative; width: 250px; height: 50px; flex: none; }
.combo select { width: 100%; height: 100%; padding: 0 0 0 10px; appearance: none; border: 0; border-bottom: 3px solid #7c7c7c; border-radius: 0; background: #969696; color: #707070; font: italic 28px "Open Sans", sans-serif; }
.combo svg { position: absolute; right: 6px; top: 18px; width: 20px; height: 10px; color: #505050; }
.titlebar h1 { flex: 1; margin: 0; font-size: 28px; line-height: 50px; font-weight: 400; text-align: center; }
.expand { width: 32px; height: 44px; display: flex; align-items: center; justify-content: center; flex: none; }
.expand svg { width: 10px; height: 20px; }
.search { width: 450px; height: 50px; flex: none; border: 0; padding: 0 12px; background: #969696; color: #d6d6d6; font: inherit; }
.search::placeholder { color: #d6d6d6; opacity: 1; }
.signin { width: 205px; padding-left: 2px; text-align: left; line-height: 50px; flex: none; }
.cart { width: 82px; height: 46px; border-right: 2px solid #7c7c7c; }
.help { margin-left: 15px; }
.winctl { display: grid; grid-template-columns: 64px 64px 54px; margin-left: 34px; height: 46px; flex: none; }
.winctl button { display: flex; align-items: center; justify-content: center; }

/* ribbon tabs */
.tabs { display: flex; height: 50px; background: #505050; color: #cfcfcf; }
.tabs button { padding: 0 26px; line-height: 52px; }
.tabs .file { width: 106px; background: #f08427; color: #fff; margin-right: 6px; }
.tabs .current { width: 173px; background: #f5f5f5; color: #505050; }
.tabs .min { display: flex; align-items: center; gap: 14px; margin-left: 28px; color: #eee; }
.min-icon { width: 36px; height: 22px; }
.caret { width: 12px; height: 8px; }

/* ribbon */
.ribbon { display: flex; height: 238px; background: #f5f5f5; border-bottom: 2px solid #f7fbff; }
.panel { display: flex; flex-direction: column; border-right: 2px solid #dcdcdc; flex: none; }
.body { flex: 1; display: grid; }
.panel h2 { margin: 0; height: 44px; display: flex; align-items: center; justify-content: center; gap: 16px; font-size: 28px; font-weight: 400; line-height: 44px; }
.panel h2 svg { width: 20px; height: 10px; }
.component { width: 366px; }
.component .body { grid-template-columns: 262px 92px; }
.position { width: 240px; }
.relationships { width: 460px; }
.relationships .body { grid-template-columns: 106px 130px 1fr; }
.pattern { width: 184px; }
.manage { width: 310px; }
.manage .body { grid-template-columns: 148px 148px; }
.productivity { width: 264px; }
.work { width: 314px; }
.work .body { grid-template-columns: 140px 1fr; }
.simplification { width: 336px; }
.simplification .body { grid-template-columns: 170px 156px; }
.big { position: relative; display: flex; flex-direction: column; align-items: center; justify-content: flex-start; padding-top: 16px; line-height: 41px; }
.big svg { width: 76px; height: 76px; margin-bottom: 12px; }
.big span { white-space: nowrap; }
.big .caret { width: 12px; height: 8px; margin: 4px 0 0; }
.big .side { position: absolute; right: 10px; top: 142px; margin: 0; }
.fx-big { height: 76px; margin-bottom: 12px; font-family: "Liberation Serif", serif; font-size: 88px; line-height: 64px; }
.rows { padding: 10px 0 0 18px; display: flex; flex-direction: column; }
.rows button { display: flex; align-items: center; gap: 12px; height: 60px; text-align: left; white-space: nowrap; }
.work .rows { padding-left: 6px; }
.rows svg { width: 40px; height: 40px; }
.rows .caret { width: 12px; height: 8px; margin-left: 6px; }
.rows button:disabled { color: #b9b9b9; }
.extra { display: flex; align-items: center; gap: 14px; width: 88px; height: 54px; margin: 10px 0 0 6px; padding-left: 8px; border: 3px solid #d2d2d2; background: #fafafa; }
.extra svg { width: 38px; height: 38px; }
.extra .caret { width: 12px; height: 8px; }

/* workspace */
.workspace { flex: 1; display: flex; }
.browser { width: 574px; flex: none; background: #fff; border-right: 4px solid #545454; color: #000; font-family: "DejaVu Sans Condensed", "DejaVu Sans", sans-serif; font-size: 26px; }
.browser-tabs { display: flex; height: 60px; background: #5e5e5e; }
.model-tab { display: flex; width: 180px; padding-left: 16px; gap: 26px; align-items: center; background: #fff; color: #5a5a5a; }
.model-tab svg { width: 10px; height: 10px; margin-bottom: 26px; }
.add { width: 50px; display: flex; align-items: center; justify-content: center; margin-right: auto; }
.add svg { width: 10px; height: 10px; }
.find { width: 52px; display: flex; align-items: center; justify-content: center; }
.find svg { width: 14px; height: 14px; }
.modes { display: flex; align-items: center; height: 83px; padding-left: 16px; }
.modes a { color: #5a5a5a; text-decoration: none; line-height: 34px; }
.modes .on { color: #1391f5; padding-right: 18px; margin-right: 20px; border-right: 3px solid #7a7a7a; }
.tree { list-style: none; margin: 0; padding: 0; font-size: 27px; }
.tree li { position: relative; display: flex; align-items: center; height: 50px; gap: 6px; white-space: nowrap; }
.tree li svg { width: 40px; height: 40px; }
.tree .root { font-size: 28px; font-weight: 700; padding-left: 2px; }
.tree li + li::before { content: ""; position: absolute; left: 18px; top: -8px; height: 16px; border-left: 3px dotted #7d7d7d; }
.twist { width: 36px; height: 50px; display: flex; align-items: center; padding-left: 6px; }
.twist::before { content: ""; width: 14px; height: 14px; border-top: 4px solid #999; border-right: 4px solid #999; transform: rotate(45deg); }
.twist::after { content: ""; width: 7px; border-top: 2px dotted #777; margin-left: 7px; }

.stage { flex: 1; min-width: 0; display: flex; flex-direction: column; }
.viewport { position: relative; flex: 1; background: linear-gradient(#7b8dab 0%, #8b9bb5 13%, #9aa6be 30%, #9fa9be 45%, #9ba4b7 60%, #999fae 70%, #abaeb8 82%, #b9bbc1 90%, #c5c6ca 100%); }
.viewport::before { content: ""; position: absolute; inset: 0; background: linear-gradient(90deg, rgba(42,48,59,.86) 0%, rgba(42,48,59,.75) 4%, rgba(42,48,59,.57) 10%, rgba(42,48,59,.4) 15%, rgba(42,48,59,.24) 20%, rgba(42,48,59,.09) 27%, rgba(42,48,59,0) 36%, rgba(42,48,59,0) 64%, rgba(42,48,59,.09) 73%, rgba(42,48,59,.24) 80%, rgba(42,48,59,.4) 85%, rgba(42,48,59,.57) 90%, rgba(42,48,59,.75) 96%, rgba(42,48,59,.86) 100%); mask-image: linear-gradient(#000 0%, rgba(0,0,0,.9) 22%, rgba(0,0,0,.84) 47%, rgba(0,0,0,.74) 58%, rgba(0,0,0,.48) 66%, rgba(0,0,0,.23) 75%, rgba(0,0,0,.1) 85%, rgba(0,0,0,0) 95%); }
.scene { position: relative; width: 100%; height: auto; font-family: "Liberation Sans", sans-serif; }
.cube-text { font-family: "Open Sans", sans-serif; font-weight: 700; fill: #53565c; }
.docctl { position: absolute; top: 13px; right: 2px; display: flex; gap: 17px; }
.docctl svg { width: 32px; height: 28px; }
.navbar { position: absolute; top: 326px; right: 0; width: 77px; height: 476px; padding: 6px 2px; display: flex; flex-direction: column; background: #7b8089; border: 2px solid #8e939c; border-left-color: #50555f; border-radius: 4px 0 0 4px; }
.navbar button { display: flex; justify-content: center; }
.navbar .pin { align-self: flex-end; }
.pin svg { width: 20px; height: 20px; }
.steer { height: 110px; padding-top: 18px; border-bottom: 1px solid #62666e; margin-bottom: 20px; }
.steer svg { width: 54px; height: 54px; }
.nav { height: 60px; }
.nav svg { width: 40px; height: 40px; }
.navbar .orbit { height: 112px; padding-top: 24px; }
.navbar .pin:last-child { margin-top: auto; }

.docbar { display: flex; height: 60px; background: #5d5d5d; color: #d2d2d2; }
.arrange { display: flex; gap: 20px; width: 302px; padding-left: 10px; align-items: center; border-right: 2px solid #a0a0a0; }
.arrange svg { width: 40px; height: 40px; }
.doc { width: 179px; padding-right: 6px; line-height: 58px; white-space: nowrap; }
.doc.open { width: 373px; display: flex; align-items: center; justify-content: center; gap: 22px; background: #f5f5f5; color: #505050; }
.doc svg { width: 22px; height: 22px; }
```
